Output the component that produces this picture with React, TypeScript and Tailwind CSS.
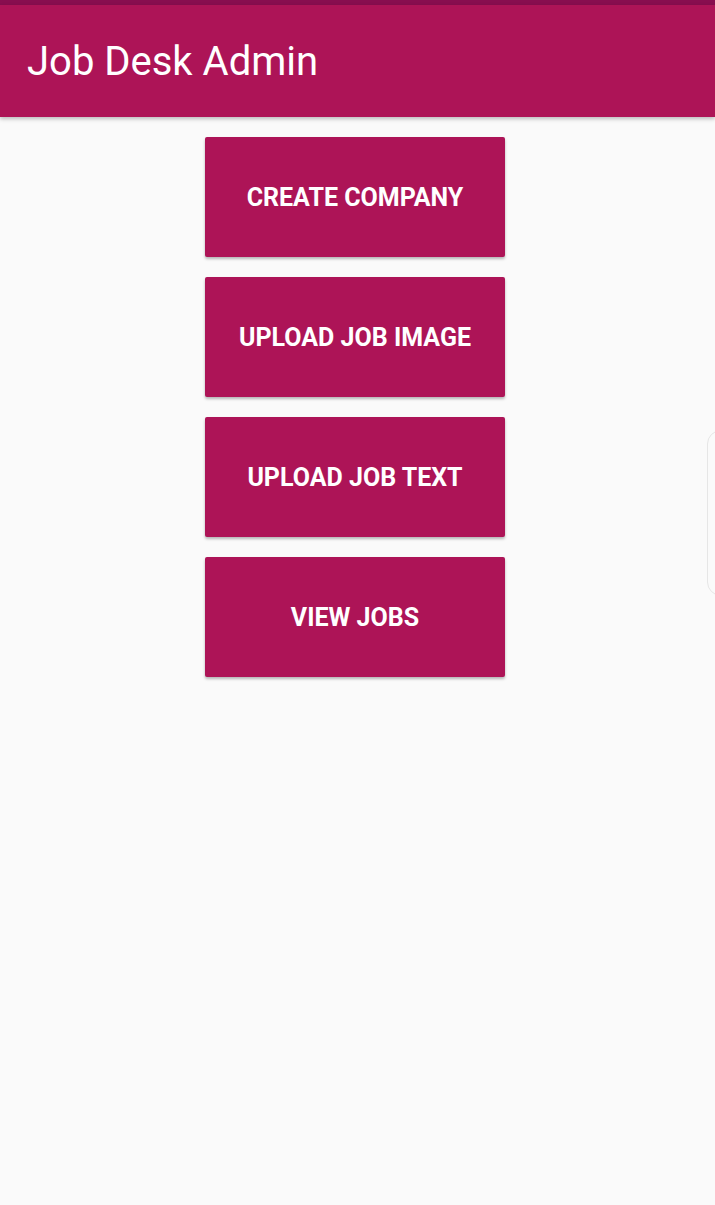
const actions = ['CREATE COMPANY', 'UPLOAD JOB IMAGE', 'UPLOAD JOB TEXT', 'VIEW JOBS'];

export default function App() {
  return (
    <div className="relative min-h-[1205px] bg-[#fafafa] font-['Roboto',sans-serif] overflow-hidden">
      {/* status bar strip */}
      <div className="h-[5px] bg-[#880e4f]" />

      {/* app bar */}
      <header className="h-[112px] bg-[#ad1457] flex items-center px-[27px] shadow-[0_2px_4px_rgba(0,0,0,0.25)] relative z-10">
        <h1 className="text-[40px] text-white font-normal leading-none mt-[2px]">Job Desk Admin</h1>
      </header>

      {/* actions */}
      <main className="flex flex-col items-center gap-5 pt-5 pr-[5px]">
        {actions.map((label) => (
          <button
            key={label}
            className="w-[300px] h-[120px] bg-[#ad1457] text-white text-[25px] font-bold leading-none pt-[1px] shadow-[0_2px_3px_rgba(0,0,0,0.28)] rounded-[2px]"
          >
            {label}
          </button>
        ))}
      </main>

      {/* edge panel handle */}
      <div className="absolute right-[-20px] top-[430px] w-[28px] h-[166px] rounded-[14px] border border-[#e6e6e6]" />
    </div>
  );
}
